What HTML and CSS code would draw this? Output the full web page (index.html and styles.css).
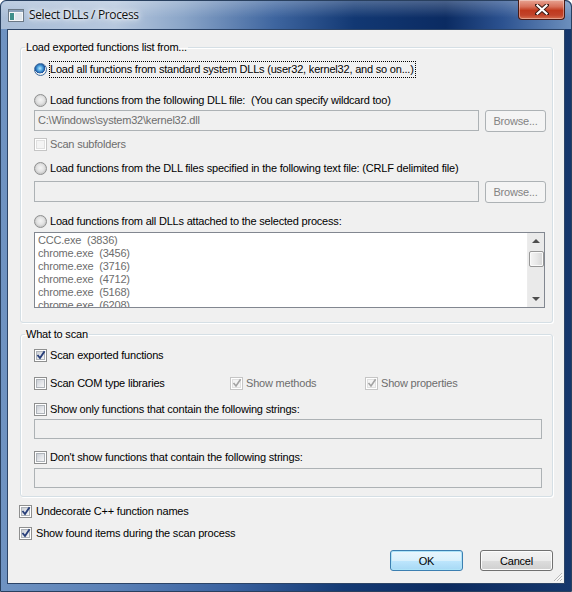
FILE: index.html
```html
<!DOCTYPE html>
<html>
<head>
<meta charset="utf-8">
<title>Select DLLs / Process</title>
<link rel="stylesheet" href="styles.css">
</head>
<body>
<div class="window">
  <div class="titlebar">
    <svg class="app-icon" width="16" height="13" viewBox="0 0 16 13">
      <rect x="0.5" y="0.5" width="15" height="12" fill="#f4f6f8" stroke="#6b7886"/>
      <rect x="1" y="1" width="14" height="2" fill="#8aa0b8"/>
      <rect x="2" y="4" width="4" height="7" fill="#3f8f8a"/>
      <rect x="7" y="4" width="7" height="7" fill="#dfe6ec"/>
    </svg>
    <span class="title">Select DLLs / Process</span>
    <div class="close-btn">
      <svg width="14" height="11" viewBox="0 0 14 11">
        <path d="M2 1 L12 10 M12 1 L2 10" stroke="#3a1a14" stroke-width="4" stroke-linecap="square"/>
        <path d="M2.5 1.5 L11.5 9.5 M11.5 1.5 L2.5 9.5" stroke="#ffffff" stroke-width="2.2" stroke-linecap="square"/>
      </svg>
    </div>
  </div>
  <div class="client">
    <fieldset class="group group-load">
      <legend>Load exported functions list from...</legend>
      <div class="group-body">
        <div class="row row-first">
          <span class="radio checked"></span><span class="label focus">Load all functions from standard system DLLs (user32, kernel32, and so on...)</span>
        </div>
        <div class="row row-radio2">
          <span class="radio"></span><span class="label">Load functions from the following DLL file:&nbsp; (You can specify wildcard too)</span>
        </div>
        <div class="field-row field-under">
          <div class="textbox disabled wide">C:\Windows\system32\kernel32.dll</div>
          <div class="button disabled browse">Browse...</div>
        </div>
        <div class="row row-sub">
          <span class="checkbox disabled"></span><span class="label gray">Scan subfolders</span>
        </div>
        <div class="row row-radio3">
          <span class="radio"></span><span class="label">Load functions from the DLL files specified in the following text file: (CRLF delimited file)</span>
        </div>
        <div class="field-row field-under2">
          <div class="textbox disabled wide"></div>
          <div class="button disabled browse">Browse...</div>
        </div>
        <div class="row row-radio4">
          <span class="radio"></span><span class="label">Load functions from all DLLs attached to the selected process:</span>
        </div>
        <div class="listbox">
          <div class="list-items">
            <div class="item">CCC.exe&nbsp; (3836)</div>
            <div class="item">chrome.exe&nbsp; (3456)</div>
            <div class="item">chrome.exe&nbsp; (3716)</div>
            <div class="item">chrome.exe&nbsp; (4712)</div>
            <div class="item">chrome.exe&nbsp; (5168)</div>
            <div class="item">chrome.exe&nbsp; (6208)</div>
          </div>
          <div class="vscroll">
            <div class="arrow up"></div>
            <div class="thumb"></div>
            <div class="track"></div>
            <div class="arrow down"></div>
          </div>
        </div>
      </div>
    </fieldset>

    <fieldset class="group group-scan">
      <legend>What to scan</legend>
      <div class="group-body">
        <div class="row row-scan1">
          <span class="checkbox checked"></span><span class="label">Scan exported functions</span>
        </div>
        <div class="row row-scan2">
          <span class="cb-item com"><span class="checkbox"></span><span class="label">Scan COM type libraries</span></span>
          <span class="cb-item methods"><span class="checkbox checked disabled"></span><span class="label gray">Show methods</span></span>
          <span class="cb-item"><span class="checkbox checked disabled"></span><span class="label gray">Show properties</span></span>
        </div>
        <div class="row row-scan3">
          <span class="checkbox"></span><span class="label">Show only functions that contain the following strings:</span>
        </div>
        <div class="textbox disabled full field-under3"></div>
        <div class="row row-scan4">
          <span class="checkbox"></span><span class="label">Don't show functions that contain the following strings:</span>
        </div>
        <div class="textbox disabled full field-under4"></div>
      </div>
    </fieldset>

    <div class="row row-bottom1">
      <span class="checkbox checked"></span><span class="label wide-gap">Undecorate C++ function names</span>
    </div>
    <div class="row row-bottom2">
      <span class="checkbox checked"></span><span class="label wide-gap">Show found items during the scan process</span>
    </div>

    <div class="buttons">
      <div class="button default">OK</div>
      <div class="button">Cancel</div>
    </div>

    <svg class="grip" width="10" height="10" viewBox="0 0 10 10">
      <path d="M9 1 L1 9 M9 4 L4 9 M9 7 L7 9" stroke="#b8b8b8" stroke-width="1"/>
      <path d="M9.5 2 L2 9.5 M9.5 5 L5 9.5 M9.5 8 L8 9.5" stroke="#ffffff" stroke-width="1"/>
    </svg>
  </div>
</div>
</body>
</html>
```
FILE: styles.css
```css
* { box-sizing: border-box; }
html, body { margin: 0; padding: 0; }
body {
  width: 572px;
  height: 592px;
  overflow: hidden;
  font-family: "Liberation Sans", Arial, sans-serif;
  font-size: 11px;
  letter-spacing: -0.2px;
  color: #000;
}
.window {
  width: 572px;
  height: 592px;
  padding: 0 6px 8px 6px;
  background:
    linear-gradient(to right, #6f93c2 0%, #5a80b6 20%, #3a62a0 40%, #143a74 60%, #0c2b60 78%, #16376c 100%);
  border: 1px solid #29405f;
  border-radius: 6px 6px 0 0;
  position: relative;
}
.titlebar {
  height: 28px;
  display: flex;
  align-items: flex-start;
  margin: 0 -6px;
  padding-left: 7px;
  background:
    linear-gradient(to bottom, rgba(255,255,255,0.25) 0%, rgba(255,255,255,0) 60%),
    linear-gradient(to right, #a9bdd7 0%, #b7c8de 20%, #8aa5c8 32%, #3e659f 48%, #123873 62%, #0b2b62 78%, #2c5290 88%, #6c8fbd 100%);
  border-radius: 6px 6px 0 0;
}
.app-icon { margin-top: 8px; flex: none; }
.title {
  margin-left: 5px;
  margin-top: 6px;
  font-family: "Open Sans", "Noto Sans", sans-serif;
  font-size: 12px;
  line-height: 16px;
  color: #111;
  letter-spacing: -0.35px;
  text-shadow: 0 0 6px #ffffff, 0 0 10px #e8eef6, 0 0 3px #ffffff;
}
.close-btn {
  margin-left: auto;
  margin-right: 6px;
  margin-top: -1px;
  width: 47px;
  height: 20px;
  border: 1px solid #4a1a14;
  border-top: none;
  border-radius: 0 0 4px 4px;
  background: linear-gradient(to bottom, #e8a493 0%, #d7705a 35%, #c0391d 55%, #c1432a 80%, #d6704f 100%);
  box-shadow: inset 0 0 0 1px rgba(255,255,255,0.35);
  display: flex;
  align-items: center;
  justify-content: center;
}
.client {
  position: relative;
  height: 555px;
  background: #f0f0f0;
  border: 1px solid #2c4467;
  padding: 0;
}
.group {
  margin: 10px 0 0 12px;
  padding: 0;
  width: 533px;
  border: 1px solid #d5dfe5;
  border-radius: 3px;
  box-shadow: inset 1px 1px 0 #ffffff, 1px 1px 0 #ffffff;
  min-width: 0;
}
.group legend {
  margin-left: 4px;
  padding: 0 1px;
  line-height: 14px;
  font-size: 11px;
}
.group-load { padding-bottom: 14px; }
.group-scan { margin-top: 4px; padding-bottom: 8px; }
.group-body { padding-left: 13px; }

.row {
  display: flex;
  align-items: center;
  height: 16px;
  white-space: nowrap;
}
.row-first { margin-top: 7px; height: 17px; }
.row-radio2 { margin-top: 14px; }
.field-under { margin-top: 2px; }
.row-sub { margin-top: 4px; }
.row-radio3 { margin-top: 8px; }
.field-under2 { margin-top: 5px; }
.row-radio4 { margin-top: 10px; }
.row-scan1 { margin-top: 6px; }
.row-scan2 { margin-top: 12px; }
.row-scan3 { margin-top: 10px; }
.field-under3 { margin-top: 2px; }
.row-scan4 { margin-top: 10px; }
.field-under4 { margin-top: 3px; }
.row-bottom1 { margin-top: 6px; padding-left: 11px; }
.row-bottom2 { margin-top: 6px; padding-left: 11px; }

.label { margin-left: 3px; line-height: 16px; }
.label.wide-gap { margin-left: 4px; }
.label.gray { color: #6d6d6d; }
.label.focus {
  margin-left: 2px;
  border: 1px dotted #000;
  line-height: 15px;
  height: 17px;
  padding-right: 1px;
}

.cb-item { display: flex; align-items: center; }
.cb-item.com { width: 196px; }
.cb-item.methods { width: 135px; }

/* Radio */
.radio {
  flex: none;
  width: 13px;
  height: 13px;
  border-radius: 50%;
  border: 1px solid #8e8f8f;
  background: radial-gradient(circle at 50% 45%, #f4f4f4 0%, #e2e2e2 45%, #c9c9c9 70%, #f8f8f8 100%);
}
.radio.checked {
  border-color: #3c6a9d;
  background:
    radial-gradient(circle at 45% 40%, #b9e6ff 0%, #4aa2de 30%, #1a4f9a 55%, rgba(26,79,154,0) 58%),
    radial-gradient(circle, #fafafa 0%, #ededed 70%, #d4d4d4 100%);
}

/* Checkbox */
.checkbox {
  flex: none;
  width: 13px;
  height: 13px;
  border: 1px solid #8e8f8f;
  background: #ffffff;
  position: relative;
}
.checkbox::before {
  content: "";
  position: absolute;
  left: 1px; top: 1px; right: 1px; bottom: 1px;
  background: linear-gradient(135deg, #cbcfd5 0%, #e2e4e8 50%, #f6f6f6 100%);
  border: 1px solid #aeb3b9;
}
.checkbox.checked::after {
  content: "";
  position: absolute;
  left: 1px; top: 0px;
  width: 10px; height: 10px;
  background: no-repeat center / 10px 10px url("data:image/svg+xml;utf8,<svg xmlns='http://www.w3.org/2000/svg' width='10' height='10' viewBox='0 0 10 10'><path d='M1.5 5 L4 8 L8.6 1.2' fill='none' stroke='%23283f7a' stroke-width='1.9'/></svg>");
}
.checkbox.disabled { border-color: #c5c5c5; }
.checkbox.disabled::before {
  background: #f4f4f4;
  border-color: #e0e0e0;
}
.checkbox.checked.disabled::after {
  background: no-repeat center / 10px 10px url("data:image/svg+xml;utf8,<svg xmlns='http://www.w3.org/2000/svg' width='10' height='10' viewBox='0 0 10 10'><path d='M1.5 5 L4 8 L8.6 1.2' fill='none' stroke='%23a3a3a3' stroke-width='1.6'/></svg>");
}

/* Text fields */
.field-row { display: flex; align-items: flex-start; }
.textbox {
  height: 21px;
  border: 1px solid #abadb3;
  border-color: #abadb3 #dbdfe6 #e3e9ef #e2e3ea;
  background: #ffffff;
  padding: 2px 3px;
  line-height: 15px;
  white-space: nowrap;
}
.textbox.disabled {
  background: #f0f0f0;
  border-color: #adb2b5;
  color: #6d6d6d;
}
.textbox.wide { width: 445px; }
.textbox.full { width: 508px; height: 20px; }

/* Buttons */
.button {
  height: 22px;
  border: 1px solid #707070;
  border-radius: 3px;
  background: linear-gradient(to bottom, #f2f2f2 0%, #ebebeb 50%, #dddddd 51%, #cfcfcf 100%);
  box-shadow: inset 0 0 0 1px #fcfcfc;
  display: flex;
  align-items: center;
  justify-content: center;
  font-size: 11px;
}
.button.browse {
  width: 61px;
  margin-left: 6px;
}
.button.disabled {
  border-color: #adb2b5;
  background: #f4f4f4;
  box-shadow: none;
  color: #838383;
}
.button.default {
  border-color: #3c7fb1;
  background: linear-gradient(to bottom, #eaf6fd 0%, #d9f0fc 50%, #bee6fd 51%, #a7d9f5 100%);
  box-shadow: inset 0 0 0 1px #aee3f8;
}
.buttons {
  display: flex;
  justify-content: flex-end;
  gap: 17px;
  margin-top: 9px;
  margin-right: 11px;
}
.buttons .button { width: 73px; height: 21px; }

/* Listbox */
.listbox {
  margin-top: 3px;
  width: 511px;
  height: 76px;
  border: 1px solid #828790;
  background: #ffffff;
  display: flex;
  overflow: hidden;
}
.list-items {
  flex: 1;
  padding: 1px 0 0 3px;
  color: #6d6d6d;
  overflow: hidden;
}
.item { height: 13px; line-height: 13px; white-space: nowrap; }
.vscroll {
  width: 17px;
  flex: none;
  background: #eaeaea;
  border-left: 1px solid #ececec;
  display: flex;
  flex-direction: column;
  align-items: center;
}
.arrow {
  height: 17px;
  width: 17px;
  position: relative;
}
.arrow::after {
  content: "";
  position: absolute;
  left: 4px;
  width: 0; height: 0;
  border-left: 4px solid transparent;
  border-right: 4px solid transparent;
}
.arrow.up::after { top: 6px; border-bottom: 4px solid #4d4d4d; }
.arrow.down::after { top: 7px; border-top: 4px solid #4d4d4d; }
.thumb {
  width: 15px;
  height: 16px;
  margin-top: 1px;
  border: 1px solid #979797;
  border-radius: 2px;
  background: linear-gradient(to right, #f5f5f5 0%, #e8e8e8 50%, #d6d6d6 100%);
  box-shadow: inset 0 0 0 1px #fafafa;
}
.track { flex: 1; }

.grip {
  position: absolute;
  right: 1px;
  bottom: 1px;
}
```
